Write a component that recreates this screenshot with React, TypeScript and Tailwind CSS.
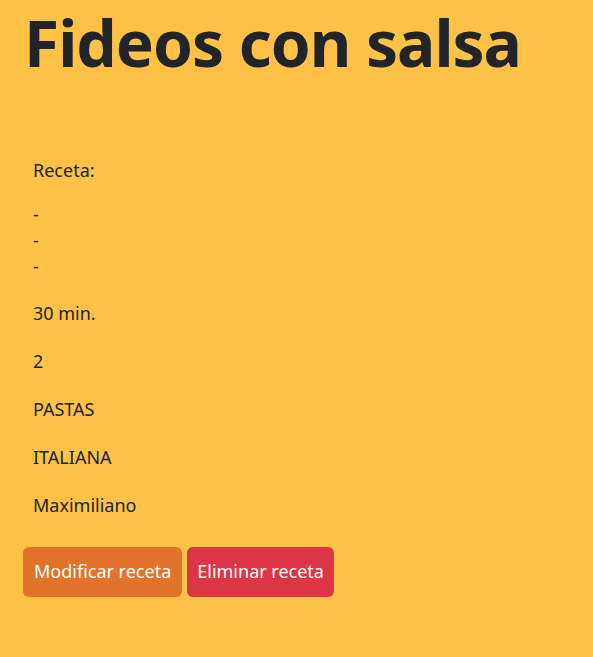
export default function App() {
  return (
    <div className="min-h-[657px] bg-[#ffc247] font-['Noto_Sans',sans-serif] text-[#212529]">
      <div className="px-6 pt-[5px]">
        <h1 className="text-[64px] font-bold leading-[1.2] tracking-[-1px]">Fideos con salsa</h1>
      </div>
      <div className="px-[33px] pt-[76px] text-[18px] leading-[24px]">
        <p className="mb-[19px]">Receta:</p>
        <div className="mb-[22px] flex flex-col leading-[26px]">
          <span>-</span>
          <span>-</span>
          <span>-</span>
        </div>
        <p className="mb-[24px]">30 min.</p>
        <p className="mb-[24px]">2</p>
        <p className="mb-[24px]">PASTAS</p>
        <p className="mb-[24px]">ITALIANA</p>
        <p className="mb-[24px]">Maximiliano</p>
      </div>
      <div className="flex gap-[5px] px-[23px] pt-[6px]">
        <button
          type="button"
          className="h-[50px] rounded-md bg-[#e1742a] px-[11px] text-[18px] text-white"
        >
          Modificar receta
        </button>
        <button
          type="button"
          className="h-[50px] rounded-md bg-[#dc3545] px-[10px] text-[18px] text-white"
        >
          Eliminar receta
        </button>
      </div>
    </div>
  );
}
